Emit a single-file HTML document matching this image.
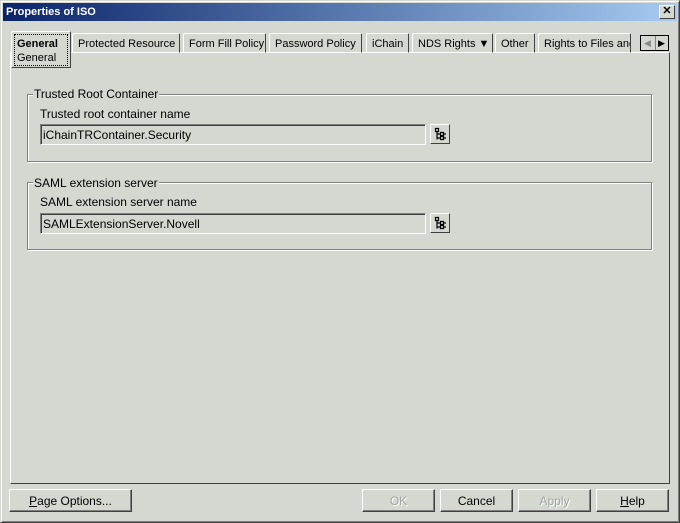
<!DOCTYPE html>
<html><head><style>
*{box-sizing:border-box;margin:0;padding:0}
body{width:680px;height:523px;background:#d4d8d0;font-family:"Liberation Sans",sans-serif;font-size:11px;color:#000;position:relative;overflow:hidden}
.a{position:absolute}
.win{left:0;top:0;width:680px;height:523px;border:1px solid;border-color:#d4d8d0 #404040 #404040 #d4d8d0;box-shadow:inset 1px 1px 0 #fff,inset -1px -1px 0 #808080}
.title{left:3px;top:3px;width:674px;height:18px;background:linear-gradient(90deg,#0a246a,#a6caf0);color:#fff;font-weight:bold;font-size:11px;padding:3px 3px}
.close{right:5px;top:5px;width:16px;height:14px;background:#d4d8d0;border:1px solid;border-color:#fff #404040 #404040 #fff;font-size:11px;font-weight:bold;line-height:11px;text-align:center}
.tab{top:33px;height:20px;border:1px solid;border-color:#fff #404040 transparent #fff;border-radius:2px 2px 0 0;padding:4px 5px 0;white-space:nowrap;font-size:11px;overflow:hidden}
.panel{left:10px;top:52px;width:660px;height:432px;border:1px solid;border-color:#fff #404040 #404040 #fff}
.grp{left:27px;width:625px;border:1px solid #808080;box-shadow:1px 1px 0 #fff,inset 1px 1px 0 #fff}
.legend{background:#d4d8d0;padding:0 1px;font-size:12px}
.lbl{font-size:12px}
.fld{left:40px;width:386px;height:21px;border:1px solid;border-color:#808080 #fff #fff #808080;box-shadow:inset 1px 1px 0 #404040;padding:3px 2px;font-size:12px}
.ib{left:430px;width:20px;height:20px;border:1px solid;border-color:#fff #404040 #404040 #fff}
.btn{top:489px;height:23px;border:1px solid;border-color:#fff #404040 #404040 #fff;box-shadow:inset -1px -1px 0 #808080;text-align:center;font-size:12px;padding-top:4px}
.dis{color:#a0a4a0;text-shadow:1px 1px 0 #fff}
</style></head><body>
<div class="a win"></div>
<div class="a title">Properties of ISO</div>
<div class="a close">✕</div>

<div class="a panel"></div>
<div class="a tab" style="left:11px;top:31px;width:60px;height:37px;border-bottom:1px solid #404040;z-index:2;background:#d4d8d0;padding:2px 2px 0"><div style="border:1px dotted #000;padding:2px 2px;height:32px;line-height:14px"><b>General</b><br>General</div></div>
<div class="a tab" style="left:72px;width:108px">Protected Resource</div>
<div class="a tab" style="left:183px;width:83px">Form Fill Policy</div>
<div class="a tab" style="left:269px;width:93px">Password Policy</div>
<div class="a tab" style="left:366px;width:43px">iChain</div>
<div class="a tab" style="left:412px;width:81px">NDS Rights &#9660;</div>
<div class="a tab" style="left:495px;width:40px">Other</div>
<div class="a tab" style="left:538px;width:93px">Rights to Files and</div>
<div class="a" style="left:640px;top:35px;width:29px;height:16px;border:1px solid #000;background:#d4d8d0;font-size:9px;line-height:14px"><span style="position:absolute;left:3px;color:#888">&#9664;</span><span style="position:absolute;left:14px;width:1px;height:14px;background:#808080"></span><span style="position:absolute;left:17px">&#9654;</span></div>

<div class="a grp" style="top:94px;height:68px"></div>
<div class="a legend" style="left:33px;top:87px">Trusted Root Container</div>
<div class="a lbl" style="left:40px;top:107px">Trusted root container name</div>
<div class="a fld" style="top:124px">iChainTRContainer.Security</div>
<div class="a ib" style="top:124px"><svg width="18" height="18" viewBox="0 0 18 18"><path d="M4.5 3.5h3v3h-3zM6 6.5v8M6 9h3M6 13h3M9.5 7.5h3v3h-3zM9.5 11.5h3v3h-3zM13 9h2M13 13h2" fill="none" stroke="#000" stroke-width="1.2"/></svg></div>

<div class="a grp" style="top:182px;height:68px"></div>
<div class="a legend" style="left:33px;top:176px">SAML extension server</div>
<div class="a lbl" style="left:40px;top:195px">SAML extension server name</div>
<div class="a fld" style="top:213px">SAMLExtensionServer.Novell</div>
<div class="a ib" style="top:213px"><svg width="18" height="18" viewBox="0 0 18 18"><path d="M4.5 3.5h3v3h-3zM6 6.5v8M6 9h3M6 13h3M9.5 7.5h3v3h-3zM9.5 11.5h3v3h-3zM13 9h2M13 13h2" fill="none" stroke="#000" stroke-width="1.2"/></svg></div>

<div class="a btn" style="left:9px;width:123px"><u>P</u>age Options...</div>
<div class="a btn dis" style="left:362px;width:73px">OK</div>
<div class="a btn" style="left:440px;width:73px">Cancel</div>
<div class="a btn dis" style="left:518px;width:73px">Apply</div>
<div class="a btn" style="left:596px;width:73px"><u>H</u>elp</div>
</body></html>
